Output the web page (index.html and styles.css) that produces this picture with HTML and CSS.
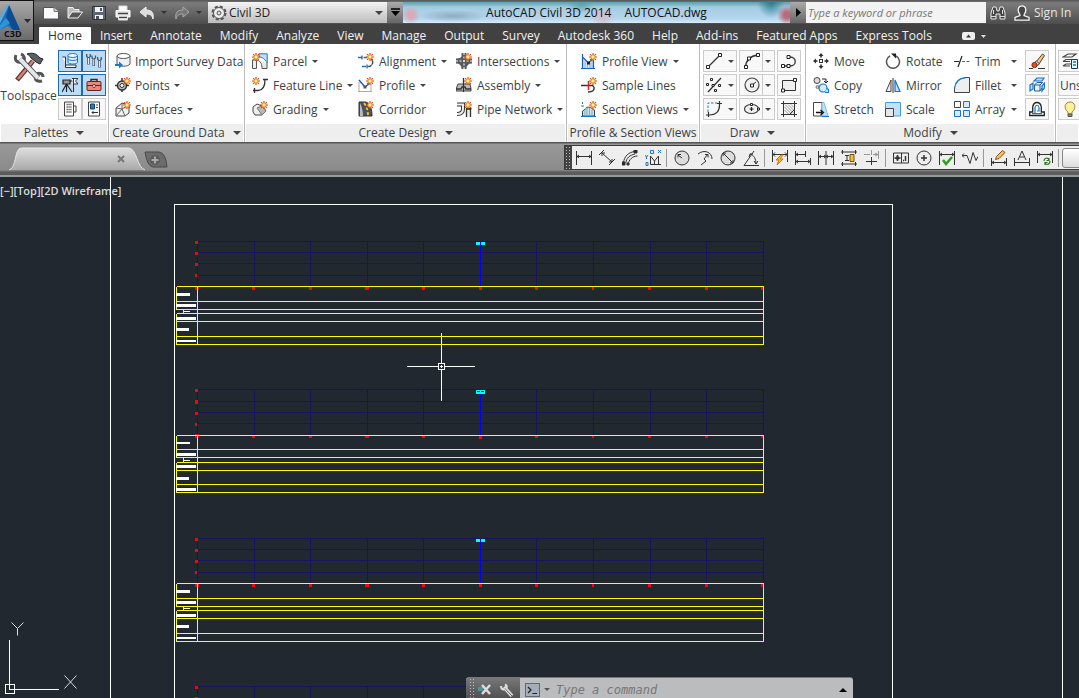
FILE: index.html
```html
<!DOCTYPE html>
<html lang="en">
<head>
<meta charset="utf-8">
<title>AutoCAD Civil 3D 2014 - AUTOCAD.dwg</title>
<link rel="stylesheet" href="styles.css">
</head>
<body>
<svg class="defs" aria-hidden="true">
  <symbol id="star" viewBox="0 0 9 9"><path d="M4.500 0v9M0 4.500h9M1.200 1.200l6.600 6.600M7.800 1.200L1.200 7.800" stroke="#e0401c" stroke-width="1.300"/><circle cx="4.500" cy="4.500" r="2.400" fill="#fff2a0" stroke="#ee8a10" stroke-width="1.100"/></symbol>
</svg>
<div class="app">
<header class="head">
  <button class="logo" aria-label="Application menu">
    <svg width="33" height="40" viewBox="0 0 33 40"><path d="M9 4L0 22v7l8-4 5 4h7z" fill="#1b6fb8"/><path d="M9 4l11 25h-7L6 17z" fill="#0d4c8e"/><path d="M9 4L0 22v-5L7 4z" fill="#4db0ea"/><path d="M6 17l4 5-10 7v-5z" fill="#2e93d8"/><path d="M24 18h7l-3.500 4z" fill="#2c2c2c"/></svg>
    <span class="logo-text">C3D</span>
  </button>
  <div class="titlebar">
    <div class="qat">
      <button aria-label="New"><svg class="i" viewBox="0 0 16 16"><path d="M.5 2.500H11l4.500 4V14H.5z" fill="#fafafa" stroke="#555"/><path d="M11 2.500v4h4.500" fill="#ccc" stroke="#777"/></svg></button>
      <button aria-label="Open"><svg class="i" viewBox="0 0 16 16"><path d="M1 13V2.500h5l1.500 2H12V7" fill="#bbb" stroke="#eee"/><path d="M1 13L5 7h10.500L11 13z" fill="#555" stroke="#f0f0f0"/></svg></button>
      <button aria-label="Save"><svg class="i" viewBox="0 0 16 16"><path d="M1.500 1.500h13v13h-13z" fill="#5d6674" stroke="#2d333d"/><path d="M4 2h8v5H4zM4 10h8v4H4z" fill="#f2f2f2"/><path d="M9 3h2v3H9zM5 11h3v3H5z" fill="#4a5260"/></svg></button>
      <button aria-label="Print"><svg class="i" viewBox="0 0 16 16"><path d="M4 1h8v5H4zM3.500 10h9v5h-9z" fill="#fff" stroke="#ddd"/><path d="M1 5.500h14V12H1z" fill="#e8e8e8" stroke="#fff"/><path d="M3 8.500h10M4 12.500h8" stroke="#444" stroke-width="1.500"/></svg></button>
      <button aria-label="Undo"><svg class="i" viewBox="0 0 16 16"><path d="M1 7l6-5v3c6 0 8 3 7 9-1-4-3-5-7-5v3z" fill="#ddd" stroke="#f2f2f2"/></svg></button>
      <span class="car dim"></span>
      <button aria-label="Redo"><svg class="i" viewBox="0 0 16 16"><path d="M15 7L9 2v3C3 5 1 8 2 14c1-4 3-5 7-5v3z" fill="#777" stroke="#aaa"/></svg></button>
      <span class="car dim"></span>
    </div>
    <div class="workspace">
      <svg class="i" viewBox="0 0 16 16"><circle cx="8" cy="8" r="6.500" fill="none" stroke="#555" stroke-width="2" stroke-dasharray="3.100 2"/><circle cx="8" cy="8" r="5.500" fill="#eee" stroke="#555"/><circle cx="8" cy="8" r="2" fill="#ddd" stroke="#555"/></svg>
      <select aria-label="Workspace"><option>Civil 3D</option></select>
      <span class="car big"></span>
    </div>
    <button class="square" aria-label="Customize toolbar"><svg width="9" height="9" viewBox="0 0 9 9"><path d="M0 1h9" stroke="#000" stroke-width="1.500"/><path d="M0 3h9L4.500 8z"/></svg></button>
    <div class="caption"><span>AutoCAD Civil 3D 2014</span><span>AUTOCAD.dwg</span></div>
    <button class="square" aria-label="Collapse search"><svg width="6" height="9" viewBox="0 0 6 9"><path d="M1 0v9l5-4.500z"/></svg></button>
    <input class="search" type="text" placeholder="Type a keyword or phrase" aria-label="Search">
    <div class="sign">
      <button aria-label="Find"><svg class="i" viewBox="0 0 16 16"><path d="M1 14V8l2-6h3l1 4h2l1-4h3l2 6v6h-5V9H6v5z" fill="#444" stroke="#e8e8e8"/><path d="M3.500 5v4M12.500 5v4M1 11.500h5M10 11.500h5" stroke="#ddd"/></svg></button>
      <button class="signin"><svg class="i" viewBox="0 0 16 16"><path d="M8 .8c4 0 4 4 3.500 6C11 8.500 10 9 10 10.500l5 2v2.700H1v-2.700l5-2C6 9 5 8.500 4.500 6.800 4 4.800 4 .8 8 .8z" fill="#454545" stroke="#f4f4f4" stroke-width="1.300"/></svg>Sign In</button>
    </div>
  </div>
  <nav class="tabs">
    <button class="on">Home</button><button>Insert</button><button>Annotate</button><button>Modify</button><button>Analyze</button><button>View</button><button>Manage</button><button>Output</button><button>Survey</button><button>Autodesk 360</button><button>Help</button><button>Add-ins</button><button>Featured Apps</button><button>Express Tools</button>
    <button class="mini" aria-label="Minimize ribbon"><svg width="26" height="8" viewBox="0 0 26 8"><rect width="13" height="8" rx="2" fill="#eee"/><path d="M4 5.500h5L6.500 2.500z" fill="#333"/><path d="M19 3h5l-2.500 3z" fill="#ddd"/></svg></button>
  </nav>
</header>

<div class="ribbon">
  <section class="panel">
    <div class="body palettes">
      <button class="toolspace"><svg width="32" height="32" viewBox="0 0 32 32"><path d="M4 29l16-19" stroke="#6b3028" stroke-width="5"/><path d="M5 28l15-18" stroke="#c98a7a" stroke-width="2.500"/><path d="M14 3c6-2 10 0 13 4l3 1-3 5-4-2-5-4c-1-2-2-3-4-4z" fill="#5b5f66" stroke="#222"/><path d="M7 8l18 19" stroke="#444" stroke-width="6"/><path d="M3 4c-2 5 1 8 5 7M8 3c3 1 4 4 3 7M22 27c1 3 3 4 7 3M23 23c4-2 7 0 7 3" fill="none" stroke="#555" stroke-width="3"/><path d="M7 8l18 19" stroke="#e3e6ea" stroke-width="4"/></svg>Toolspace</button>
      <div class="grid2">
        <button class="sel" aria-label="Toolspace"><svg class="i" viewBox="0 0 16 16"><path d="M.5 4h3v10.500H14V12H4" fill="#fff" stroke="#333"/><path d="M6 2.500v7c1 2 8.500 2 9.500 0v-7" fill="#d6ecfb" stroke="#1c74c4"/><ellipse cx="10.700" cy="2.500" rx="4.700" ry="2" fill="#fff" stroke="#1c74c4"/><path d="M6 6c1 2 8.500 2 9.500 0" fill="none" stroke="#1c74c4"/></svg></button>
        <button class="sel" aria-label="Survey toolspace"><svg class="i" viewBox="0 0 16 16"><path d="M.7 1v2.500L2.500 5l1.800-1.500V1M6 2.500V5l1.700 1.500L9.500 5V2.500M11.700 4v2.500L13.500 8l1.800-1.500V4" fill="none" stroke="#44566c" stroke-width="1.300"/><path d="M2.500 5v6.500M7.700 6.500V13M13.500 8v6.500" stroke="#44566c" stroke-width="2.600"/><path d="M2.500 5v6M7.700 6.500v6M13.500 8v6" stroke="#eef"/></svg></button>
        <button class="sel" aria-label="Survey"><svg class="i" viewBox="0 0 16 16"><path d="M1 3h7v4H1zM8 4h3M4.500 7v8M4.500 7L0 15M4.500 7L10 15" fill="#999" stroke="#222" stroke-width="1.200"/><path d="M11.500 15V1M10 1.500h6L13.500 4 16 7h-5" fill="#fff" stroke="#333"/></svg></button>
        <button class="sel" aria-label="Toolbox"><svg class="i" viewBox="0 0 16 16"><path d="M5 5V2.500h6V5" fill="none" stroke="#5c1a14" stroke-width="1.500"/><rect x="1" y="4.500" width="14" height="9" rx="1" fill="#e58a7c" stroke="#6d1f18"/><path d="M1 8.500h14" stroke="#6d1f18"/><path d="M7 7.500h2v3H7z" fill="#fff" stroke="#6d1f18" stroke-width=".7"/></svg></button>
        <button aria-label="Properties"><svg class="i" viewBox="0 0 16 16"><path d="M2.500 1h9v14h-9zM11.500 5H14v6h-2.500" fill="#fff" stroke="#444"/><path d="M4.500 3.500h5M4.500 6h5M4.500 8.500h5M4.500 11h5" stroke="#555" stroke-width="1.300" stroke-dasharray="1.300 .6"/></svg></button>
        <button aria-label="Panorama"><svg class="i" viewBox="0 0 16 16"><path d="M2.500 1h11v14h-11z" fill="#fff" stroke="#444"/><path d="M4.500 3h4v5h-4z" fill="#2a78c0" stroke="#123c66"/><path d="M10 4h2M10 6.500h2" stroke="#444"/><path d="M12 11.500H6M7.500 10L6 11.500 7.500 13" fill="none" stroke="#333"/></svg></button>
      </div>
    </div>
    <button class="name">Palettes<span class="car big"></span></button>
  </section>

  <section class="panel">
    <div class="body ground">
      <button class="cmd"><svg class="i" viewBox="0 0 16 16"><path d="M2 3v8c2 3 11 3 13 0V3" fill="#eef0f2" stroke="#555"/><ellipse cx="8.500" cy="3" rx="6.500" ry="2.500" fill="#fff" stroke="#555"/><path d="M0 11h4V8.500l4 3.500-4 3.500V13H0z" fill="#1e78c8"/></svg>Import Survey Data</button>
      <button class="cmd"><svg class="i" viewBox="0 0 16 16"><path d="M7 1v14M0 8.500h14" stroke="#333" stroke-width="1.500"/><circle cx="7" cy="8.500" r="4.500" fill="#bbb" stroke="#333" stroke-width="1.500"/><circle cx="7" cy="8.500" r="2" fill="#fff" stroke="#333"/><use href="#star" x="8" width="8" height="8"/></svg>Points<span class="car"></span></button>
      <button class="cmd"><svg class="i" viewBox="0 0 16 16"><path d="M1 7l6-5 7 2v8l-4 3H1z" fill="#f2f2f2" stroke="#444"/><path d="M1 7l6 1 7-4M7 2v6l-6 7M7 8l3 7" fill="none" stroke="#666"/><use href="#star" x="8" width="8" height="8"/></svg>Surfaces<span class="car"></span></button>
    </div>
    <button class="name">Create Ground Data<span class="car big"></span></button>
  </section>

  <section class="panel">
    <div class="body design">
      <button class="cmd"><svg class="i" viewBox="0 0 16 16"><path d="M.5 7h4v8.500h-4z" fill="#eee" stroke="#555"/><path d="M7 .8h8.200V10C13 6 10 4 7 4z" fill="#bfe2f7" stroke="#1c74c4"/><path d="M5 7c4 1 5 5 5 8.500h5V10" fill="#e8e8e8" stroke="#555"/><use href="#star" width="8" height="8"/></svg>Parcel<span class="car"></span></button>
      <button class="cmd"><svg class="i" viewBox="0 0 16 16"><path d="M1 13.500h5c5 0 7-4 7-11M11 2.500h5M2.500 11v5" fill="none" stroke="#333" stroke-width="1.300"/><use href="#star" width="8" height="8"/></svg>Feature Line<span class="car"></span></button>
      <button class="cmd"><svg class="i" viewBox="0 0 16 16"><path d="M1 6l4-3 5 2 4 5-4 4H3l-2-3z" fill="#eee" stroke="#444"/><path d="M5 7l5-2 4 5-4 4z" fill="#b5b8bd" stroke="#777"/><use href="#star" x="8" width="8" height="8"/></svg>Grading<span class="car"></span></button>
      <button class="cmd"><svg class="i" viewBox="0 0 16 16"><path d="M0 4.500h9M4 13.500h6c6 0 6-7 2-8" fill="none" stroke="#1c74c4" stroke-width="1.300" stroke-dasharray="4 1.500"/><path d="M4 2.500v4M9 11.500v4M13 6c3 3 1 7-2 7.500" fill="none" stroke="#333"/><use href="#star" x="8" width="8" height="8"/></svg>Alignment<span class="car"></span></button>
      <button class="cmd"><svg class="i" viewBox="0 0 16 16"><path d="M1 3l6 7 6-5" fill="none" stroke="#1c5fb4" stroke-width="1.500"/><path d="M1 5v9M13 7v7M0 14.500h14" stroke="#aaa"/><path d="M5.500 8.500h3v3h-3z" fill="#555"/><use href="#star" x="8" width="8" height="8"/></svg>Profile<span class="car"></span></button>
      <button class="cmd"><svg class="i" viewBox="0 0 16 16"><path d="M1 1h7c5 3 6 8 6 14H1z" fill="#4d5258" stroke="#333"/><path d="M2 2v13h3c0-5-1-9-3-13z" fill="#b8bcc0"/><path d="M6 2c3 4 4 8 4 13" fill="none" stroke="#f6c828" stroke-width="1.800" stroke-dasharray="3 2"/><use href="#star" x="8" width="8" height="8"/></svg>Corridor</button>
      <button class="cmd"><svg class="i" viewBox="0 0 16 16"><path d="M5.500 0v3q0 2.500-5.500 2.500v5q5.500 0 5.500 5.500h5q0-5.500 5.500-5.500v-5q-5.500 0-5.500-2.500V0z" fill="#555b63"/><path d="M8 0v16M0 8h16" stroke="#fff" stroke-dasharray="2 1.500"/><use href="#star" x="8" width="8" height="8"/></svg>Intersections<span class="car"></span></button>
      <button class="cmd"><svg class="i" viewBox="0 0 16 16"><path d="M0 12l2-5h12l1 5v2H0z" fill="#b8bcc0" stroke="#444"/><path d="M0 12h5l1-2h3l1 2h5M7.500 1v14" fill="none" stroke="#333" stroke-width="1.300"/><use href="#star" x="8" width="8" height="8"/></svg>Assembly<span class="car"></span></button>
      <button class="cmd"><svg class="i" viewBox="0 0 16 16"><path d="M1 3.500h6V8c0 3-2 5-6 5" fill="none" stroke="#333" stroke-width="4"/><path d="M1 3.500h6V8c0 3-2 5-6 5" fill="none" stroke="#eee" stroke-width="2"/><path d="M10.500 16V8h4v8" fill="#eee" stroke="#333" stroke-width="1.300"/><path d="M10 7.500h5.500" stroke="#333" stroke-width="1.500"/><use href="#star" x="8" width="8" height="8"/></svg>Pipe Network<span class="car"></span></button>
    </div>
    <button class="name">Create Design<span class="car big"></span></button>
  </section>

  <section class="panel">
    <div class="body views">
      <button class="cmd"><svg class="i" viewBox="0 0 16 16"><path d="M1.500 4l6 6 5-5v10.500h-11z" fill="#cfe2f4"/><path d="M4 8v7M6.500 11v4M9 10v5M11 8v7" stroke="#9bb8d4"/><path d="M1.500 1v3M0 15.500h14M1.500 4l6 6 5-5M1.500 4v11M12.500 7v8" fill="none" stroke="#1c5fb4" stroke-width="1.200"/><path d="M6 8.500h3v3H6z" fill="#222"/><use href="#star" x="8" width="8" height="8"/></svg>Profile View<span class="car"></span></button>
      <button class="cmd"><svg class="i" viewBox="0 0 16 16"><path d="M0 8.500h11M7 15c6 0 8-4 4-7" fill="none" stroke="#333" stroke-width="1.300"/><path d="M7.500 4v9" stroke="#e02010" stroke-width="1.500"/><use href="#star" x="8" width="8" height="8"/></svg>Sample Lines</button>
      <button class="cmd"><svg class="i" viewBox="0 0 16 16"><path d="M1.500 15V10c3-1 3-4 6-4s4 3 6 3v6z" fill="#cfe0ee" stroke="#444"/><path d="M4 9v6M6 7v8M8.500 7v8M11 9v6" stroke="#8ab"/><path d="M1.500 1v2M0 5h3M0 15.500h15" stroke="#1c74c4"/><use href="#star" x="8" width="8" height="8"/></svg>Section Views<span class="car"></span></button>
    </div>
    <button class="name">Profile &amp; Section Views</button>
  </section>

  <section class="panel">
    <div class="body draw">
      <button class="box" aria-label="Line"><svg class="i" viewBox="0 0 16 16"><path d="M2 14L14 2" stroke="#333" stroke-width="1.300"/><path d="M.5 12.500h3v3h-3zM12.500.5h3v3h-3z" fill="#fff" stroke="#222"/></svg><span class="car"></span></button>
      <button class="box split" aria-label="Arc"><svg class="i" viewBox="0 0 16 16"><path d="M1.500 14C2 7 6 3 14 2" fill="none" stroke="#333" stroke-width="1.300"/><path d="M.5 12.500h3v3h-3zM12.500.5h3v3h-3zM3.500 4h3v3h-3z" fill="#fff" stroke="#222"/></svg><span class="car"></span></button>
      <button class="box" aria-label="Polyline"><svg class="i" viewBox="0 0 16 16"><path d="M2 13h7c7 0 7-9 0-9" fill="none" stroke="#333" stroke-width="1.300"/><path d="M.5 11.500h3v3h-3zM6 11.500h3v3H6zM6 2.500h3v3H6z" fill="#fff" stroke="#222"/></svg></button>
      <button class="box" aria-label="Points"><svg class="i" viewBox="0 0 16 16"><path d="M2 15L15 1" stroke="#333" stroke-width="1.300"/><path d="M4.500 1.500h2v2h-2zM.5 6.500h2v2h-2zM6 7.500h2v2H6zM12.500 7.500h2v2h-2zM8.500 12.500h2v2h-2z" fill="#fff" stroke="#222"/></svg><span class="car"></span></button>
      <button class="box split" aria-label="Circle"><svg class="i" viewBox="0 0 16 16"><circle cx="8" cy="8" r="7" fill="#f0f0f0" stroke="#444" stroke-width="1.200"/><path d="M8 8l4-3" stroke="#333"/><path d="M6.500 7h3v3h-3z" fill="#fff" stroke="#222"/></svg><span class="car"></span></button>
      <button class="box" aria-label="Rectangle"><svg class="i" viewBox="0 0 16 16"><path d="M1.500 3.500h13v10h-13z" fill="#eee" stroke="#333"/><path d="M.5 12h3v3h-3zM12.500 1.500h3v3h-3z" fill="#fff" stroke="#222"/></svg></button>
      <button class="box" aria-label="Curve"><svg class="i" viewBox="0 0 16 16"><path d="M2 11V2h10" fill="none" stroke="#1c74c4" stroke-dasharray="2.500 1.500"/><path d="M13.500 0v4c0 7-4 10-10 10H0M2.500 11v5M11 2.500h5" fill="none" stroke="#333" stroke-width="1.200"/></svg><span class="car"></span></button>
      <button class="box split" aria-label="Ellipse"><svg class="i" viewBox="0 0 16 16"><ellipse cx="7.500" cy="8" rx="7" ry="4.500" fill="#f0f0f0" stroke="#444" stroke-width="1.200"/><path d="M7.500 6v4M5.500 8h4" stroke="#222" stroke-width="1.200"/><path d="M6.500 2.500h2v2h-2zM13.500 7h2v2h-2z" fill="#fff" stroke="#222"/></svg><span class="car"></span></button>
      <button class="box" aria-label="Hatch"><svg class="i" viewBox="0 0 16 16"><path d="M3.500 6l7 7M3.500 9l4 4M4 3.500l9 9M7 3.500l6 6M10 3.500l3 3" stroke="#999"/><path d="M2.500 0v16M13.500 0v16M0 2.500h16M0 13.500h16M13 9l-4 4" stroke="#333"/></svg></button>
    </div>
    <button class="name">Draw<span class="car big"></span></button>
  </section>

  <section class="panel">
    <div class="body modify">
      <button class="cmd"><svg class="i" viewBox="0 0 16 16"><path d="M8 1v3.500M8 11.500V15M1 8h3.500M11.500 8H15" stroke="#222" stroke-width="1.500"/><path d="M8 0l2.500 3h-5zM8 16l2.500-3h-5zM0 8l3-2.500v5zM16 8l-3-2.500v5zM6 6h4v4H6z" fill="#333"/><path d="M7 7h2v2H7z" fill="#fff"/></svg>Move</button>
      <button class="cmd"><svg class="i" viewBox="0 0 16 16"><circle cx="4" cy="3.500" r="3" fill="#ddd" stroke="#444"/><circle cx="4.500" cy="10" r="1.500" fill="#ccc" stroke="#777"/><circle cx="10" cy="11" r="4" fill="#d6ecfb" stroke="#1c74c4" stroke-width="1.200"/><path d="M13 12h2.500v3.500H12" fill="#bfe2f7" stroke="#1c74c4"/><path d="M9 2h4v3M11 4l2 2 2-2" fill="none" stroke="#222"/></svg>Copy</button>
      <button class="cmd"><svg class="i" viewBox="0 0 16 16"><path d="M.5 1.500H9v13.500H.5z" fill="#fff" stroke="#444"/><path d="M9 1.500h2L15 15H9z" fill="#bfe2f7" stroke="#7db9e4"/><path d="M3 11.500h6M7.500 9l3 2.500-3 2.500" fill="none" stroke="#111" stroke-width="1.300"/><path d="M9 15.500h7" stroke="#1c74c4"/></svg>Stretch</button>
      <button class="cmd"><svg class="i" viewBox="0 0 16 16"><path d="M11 3a6.500 6.500 0 1 1-6 0" fill="none" stroke="#555" stroke-width="1.500"/><path d="M6 .5h5v5z" fill="#222"/></svg>Rotate</button>
      <button class="cmd"><svg class="i" viewBox="0 0 16 16"><path d="M6 3v11.500H1z" fill="#eee" stroke="#444"/><path d="M10 3v11.500h5z" fill="#bfe2f7" stroke="#1c74c4" stroke-width="1.200"/><path d="M8 1v15" stroke="#333"/></svg>Mirror</button>
      <button class="cmd"><svg class="i" viewBox="0 0 16 16"><path d="M.5 1.500h15v13.500h-7V9h-8z" fill="#bfe2f7" stroke="#4b9bd6"/><path d="M.5 7.500h8v8h-8z" fill="#e6e6e6" stroke="#444"/></svg>Scale</button>
      <button class="cmd"><svg class="i" viewBox="0 0 16 16"><path d="M0 8.500h5M4 14l4-11" stroke="#222" stroke-width="1.200"/><path d="M8 8.500h8" stroke="#1c74c4" stroke-width="1.200" stroke-dasharray="3 1.500"/></svg>Trim</button>
      <button class="cmd"><svg class="i" viewBox="0 0 16 16"><path d="M.5 15.500C0 5 5 .5 15.500.5v15z" fill="#eee"/><path d="M.5 12C1 4 5 1 12 .5" fill="none" stroke="#1c74c4" stroke-width="1.300"/><path d="M12 .5h3.500v15H.500V12" fill="none" stroke="#444"/></svg>Fillet</button>
      <button class="cmd"><svg class="i" viewBox="0 0 16 16"><path d="M.5.500h6v6h-6z" fill="#fff" stroke="#444"/><path d="M9.500.500h6v6h-6zM.5 9.500h6v6h-6zM9.500 9.500h6v6h-6z" fill="#d6ecfb" stroke="#1c74c4"/></svg>Array</button>
      <span class="arrow"><span class="car"></span></span><span class="arrow"><span class="car"></span></span><span class="arrow"><span class="car"></span></span>
      <button class="box" aria-label="Erase"><svg class="i" viewBox="0 0 16 16"><path d="M0 15.500h4M9 15.500h7" stroke="#333"/><path d="M7 9L13.500 1l2 1.500L10 11z" fill="#f0c890" stroke="#5a3c20"/><path d="M5.500 9.500l1.800-1.500 3 2.700L9 12.500z" fill="#eee" stroke="#444"/><circle cx="5.500" cy="12" r="2.600" fill="#d8552c" stroke="#8a2314"/></svg></button>
      <button class="box" aria-label="Explode"><svg class="i" viewBox="0 0 16 16"><path d="M5 4l3-3h7l-2 3zM1 8l3-2v6l-3 2zM13 9l2.500-3v5L13 14z" fill="#bfe2f7" stroke="#1c74c4" stroke-width="1.200"/><path d="M5.500 8h5.500v6H5.500zM5.500 8L8 5.500h5.500L11 8M11 14l2-3" fill="#e8f4fd" stroke="#1c5fa4"/></svg></button>
      <button class="box" aria-label="Offset"><svg class="i" viewBox="0 0 16 16"><path d="M.7 14.500h14.600v-3.500h-3V6c-1-6-7.600-6-8.600 0v5h-3z" fill="#fff" stroke="#222" stroke-width="1.300"/><path d="M3 12.700h10M6 12.500V6.500c.5-3 3.500-3 4 0v3.500H8" fill="none" stroke="#1c74c4" stroke-width="1.200"/></svg></button>
    </div>
    <button class="name">Modify<span class="car big"></span></button>
  </section>

  <section class="panel">
    <div class="body layers">
      <button class="box wide" aria-label="Layer properties"><svg class="i" viewBox="0 0 16 16"><path d="M1 4l5-3h8l-4 3zM1 8.500l3-2h6M1 8.500h7M1 13l3-2h5M1 13h7" fill="none" stroke="#444" stroke-width="1.200"/><path d="M9.500 6.500h6v9h-6z" fill="#eaf4fc" stroke="#234"/><path d="M11 9h3M11 12h3" stroke="#1c74c4" stroke-width="1.500"/></svg></button>
      <button class="box wide text">Unsaved Layer State</button>
      <button class="box wide" aria-label="Layer on"><svg class="i" viewBox="0 0 16 16"><path d="M6 11C1 7 3 1 8 1s7 6 2 10v2H6z" fill="#fff0a0" stroke="#a98820"/><path d="M6 13h4v2.500H6z" fill="#888" stroke="#555"/></svg></button>
    </div>
    <div class="name"></div>
  </section>
</div>

<div class="docbar">
  <div class="doctabs">
    <svg width="170" height="26" viewBox="0 0 170 26"><defs><linearGradient id="tab" x2="0" y2="1"><stop offset="0" stop-color="#dedede"/><stop offset="1" stop-color="#a9a9a9"/></linearGradient></defs><path d="M9 25C17 23 14 4 21 3h108c8 1 8 20 16 22z" fill="url(#tab)"/><path d="M9 25C17 23 14 4 21 3h108c8 1 8 20 16 22" fill="none" stroke="#e6e6e6"/><path d="M118 11l6 6M124 11l-6 6" stroke="#777" stroke-width="2"/><path d="M145 7h14q7 1 8 15h-14q-6-1-8-15z" fill="#6c6c6c" stroke="#484848"/><circle cx="155" cy="15" r="5" fill="#5c5c5c"/><path d="M155 11.500v7M151.500 15h7" stroke="#aaa" stroke-width="2"/></svg>
  </div>
  <div class="dims">
    <i class="grip"></i>
    <button aria-label="Linear"><svg class="i" viewBox="0 0 16 16"><path d="M.5 1v14M15.500 1v14M1 6.500h14M3 5L1 6.500 3 8M13 5l2 1.500L13 8"/></svg></button>
    <button aria-label="Aligned"><svg class="i" viewBox="0 0 16 16"><path d="M0 5l5-5M10 15l6-6M3 3l10 9M3 6V3h3M13 9v3h-3"/></svg></button>
    <button aria-label="Arc length"><svg class="i" viewBox="0 0 16 16"><path d="M1.500 13C2 6 7 2 13 1.500M6.500 14c0-4 4-8 9-8M4 13c0-5 4-8 9-9"/><path d="M0 12h3v3H0zM12 0h3v3h-3zM5 13h2v2H5z" fill="#222"/></svg></button>
    <button aria-label="Ordinate"><svg class="i" viewBox="0 0 16 16"><path d="M5.500 6v8.500h11M5.500 6l4 5 4-5v9M9.500 11v4"/><path d="M13 0l3 3M16 0l-3 3M0 5l1.500 2L3 5M1.500 7v2M5.500.500h3v3h-3zM1 12.500h2v3H1z" stroke="#1c74c4"/></svg></button>
    <b></b>
    <button aria-label="Radius"><svg class="i" viewBox="0 0 16 16"><circle cx="8" cy="8" r="7" fill="#ddd"/><path d="M8 8L4 5M4 7.500V4.500h3"/></svg></button>
    <button aria-label="Jogged"><svg class="i" viewBox="0 0 16 16"><path d="M1 4c6-5 14-2 14 5M4 15l5-4-2-2 4-5M8 4.500h3v3"/></svg></button>
    <button aria-label="Diameter"><svg class="i" viewBox="0 0 16 16"><circle cx="8" cy="8" r="7" fill="#ddd"/><path d="M3 3l10 10M3 6V3h3M13 10v3h-3"/></svg></button>
    <button aria-label="Angular"><svg class="i" viewBox="0 0 16 16"><path d="M16 15.500H1L11 1M7 4c4 1 6 5 6 10M6 7l1-3h3M11 11l2 3 2-3"/></svg></button>
    <b></b>
    <button aria-label="Quick"><svg class="i" viewBox="0 0 16 16"><path d="M.5 0v12M15.500 0v12M1 4.500h14M3 2.500l-2 2 2 2M13 2.500l2 2-2 2"/><path d="M9 5l-5 5h3l-2 5 6-6H8l3-4z" fill="#f8c020" stroke="#d8701c"/></svg></button>
    <button aria-label="Baseline"><svg class="i" viewBox="0 0 16 16"><path d="M.5 1v14M10.500 1v6M15.500 8v7M1 4.500h9M1 11.500h14M3 3L1 4.500 3 6M3 10l-2 1.500L3 13M13 10l2 1.500-2 1.500"/></svg></button>
    <button aria-label="Continue"><svg class="i" viewBox="0 0 16 16"><path d="M.5 1v14M8 1v14M15.500 1v14M1 6.500h14M3 5L1 6.500 3 8M6 5l2 1.500L6 8M10 5L8 6.500 10 8M13 5l2 1.500L13 8"/></svg></button>
    <button aria-label="Space"><svg class="i" viewBox="0 0 16 16"><path d="M1.500 0v4M14.500 0v4M0 2h16M1.500 12v4M14.500 12v4M0 14h16M4 5.500h4M6 5v6M4 10.500h4"/><path d="M9 4.500h4v7H9z" fill="#f6c030" stroke="#7a4c08"/></svg></button>
    <button aria-label="Break"><svg class="i" viewBox="0 0 16 16"><path d="M0 4.500h6M9 4.500h6M14.500 1v8M7.500 0v5M11 3l3 1.500L11 6" stroke="#999"/><path d="M7.500 7v8M2 11.500h11"/></svg></button>
    <b></b>
    <button aria-label="Tolerance"><svg class="i" viewBox="0 0 16 16"><path d="M.5 3h15v10H.5zM8.500 3v10"/><path d="M4.500 5v6M1.500 8h6M12.500 6v5M10 10.500h1" stroke-width="1.500"/><circle cx="4.500" cy="8" r="1.500"/></svg></button>
    <button aria-label="Center mark"><svg class="i" viewBox="0 0 16 16"><circle cx="8" cy="8" r="7"/><path d="M8 5v6M5 8h6" stroke-width="1.500"/></svg></button>
    <button aria-label="Inspect"><svg class="i" viewBox="0 0 16 16"><path d="M.5 1v14M15.500 1v14M1 4.500h14M3 3L1 4.500 3 6M13 3l2 1.500L13 6"/><path d="M4 10l3 4 6-7" stroke="#2ca01c" stroke-width="2.500"/></svg></button>
    <button aria-label="Jogged linear"><svg class="i" viewBox="0 0 16 16"><path d="M0 5.500h5l3 8 3-11 3 8 2-4M2 3.500l-2 2 2 2"/></svg></button>
    <b></b>
    <button aria-label="Dimension edit"><svg class="i" viewBox="0 0 16 16"><path d="M.5 8v8M15.500 8v8M1 12.500h14M3 11l-2 1.500L3 14M13 11l2 1.500-2 1.500"/><path d="M4.500 9.500l1-3 6-6 2.500 2-6 6z" fill="#f6c060" stroke="#8a5014"/></svg></button>
    <button aria-label="Text edit"><svg class="i" viewBox="0 0 16 16"><path d="M.5 8v8M15.500 8v8M1 12.500h14M4 10l4-9 4 9M6 7h4"/></svg></button>
    <button aria-label="Update"><svg class="i" viewBox="0 0 16 16"><path d="M.5 1v12M15.500 1v12M1 4.500h14M3 3L1 4.500 3 6M13 3l2 1.500L13 6"/><path d="M7 11c0-3 4-4 5-1M13 11c0 4-4 4-5 2M12 8v2.500H9.500M8 15v-2.500h2.500" stroke="#2a7a2a" stroke-width="1.200"/></svg></button>
    <b></b>
    <div class="style"></div>
  </div>
</div>

<main class="canvas">
  <svg class="drawing" role="img" aria-label="Profile views in model space">
    <g transform="translate(0 -177)" shape-rendering="crispEdges">
      <g transform="translate(.5 .5)" fill="none">
        <g stroke="#14145f">
          <path d="M197 241H763M197 252H763M197 263H763M197 275H763M197 241V286M254 241V286M310 241V286M367 241V286M423 241V286M536 241V286M593 241V286M650 241V286M706 241V286M763 241V286"/>
          <path d="M197 389H763M197 401H763M197 412H763M197 423H763M197 389V435M254 389V435M310 389V435M367 389V435M423 389V435M536 389V435M593 389V435M650 389V435M706 389V435M763 389V435"/>
          <path d="M197 538H763M197 549H763M197 560H763M197 572H763M197 538V583M254 538V583M310 538V583M367 538V583M423 538V583M536 538V583M593 538V583M650 538V583M706 538V583M763 538V583"/>
          <path d="M197 686H763M197 698H763M197 686V732M254 686V732M310 686V732M367 686V732M423 686V732M480 686V732M536 686V732M593 686V732M650 686V732M706 686V732M763 686V732"/>
        </g>
        <path d="M480 241V286M480 389V435M480 538V583" stroke="#00f"/>
        <g stroke="#fff">
          <path d="M110 176V700M1062 176V700M174 700V204H892V700"/>
          <path d="M5 684H14V693H5zM438 363H444V369H438z"/>
          <path d="M11 622L17 628V635M17 628L23 622M64 675L76 688M76 675L64 688" stroke="#ddd" shape-rendering="auto"/>
        </g>
      </g>
      <path fill="#fff" d="M9 640h1v50h-1zM9 689h50v1h-50zM407 366h31v1h-31zM445 366h30v1h-30zM441 333h1v30h-1zM441 370h1v31h-1zM440 366h3v1h-3zM441 365h1v3h-1z"/>
      <g fill="#f00">
        <path d="M195 241h3v3h-3zM195 252h3v3h-3zM195 263h3v3h-3zM195 274h2v3h-2zM195 287h4v3h-4zM252 287h3v3h-3zM309 287h3v3h-3zM365 287h4v3h-4zM422 287h3v3h-3zM479 287h3v3h-3zM535 287h3v3h-3zM592 287h2v3h-2zM648 287h3v3h-3zM705 287h3v3h-3zM761 287h2v3h-2z"/>
        <path d="M195 389h3v3h-3zM195 400h3v4h-3zM195 412h3v3h-3zM195 423h2v3h-2zM195 434h4v4h-4zM252 436h3v2h-3zM309 436h3v2h-3zM365 436h4v2h-4zM422 436h3v2h-3zM479 436h3v3h-3zM535 436h3v2h-3zM592 436h2v2h-2zM648 436h3v2h-3zM705 436h3v2h-3zM761 436h2v2h-2z"/>
        <path d="M195 538h3v3h-3zM195 549h3v3h-3zM195 560h3v3h-3zM195 571h2v3h-2zM195 584h4v3h-4zM252 584h3v3h-3zM309 584h3v3h-3zM365 584h4v3h-4zM422 584h3v3h-3zM479 584h3v3h-3zM535 584h3v3h-3zM592 584h2v3h-2zM648 584h3v3h-3zM705 584h3v3h-3zM761 584h2v3h-2z"/>
        <path d="M195 686h3v3h-3zM195 697h3v3h-3z"/>
      </g>
      <g transform="translate(.5 .5)" fill="none" stroke="#ff0">
        <path d="M176 286H763V344H176M176 301H763M176 309H763M176 313H763M176 321H763M176 336H763M197 286V344M176 286V309M176 313V344M183 309V313"/>
        <path d="M176 435H763V492H176M176 449H763M176 457H763M176 462H763M176 470H763M176 484H763M197 435V492M176 435V457M176 462V492M183 457V462"/>
        <path d="M176 583H763V641H176M176 598H763M176 606H763M176 610H763M176 618H763M176 633H763M197 583V641M176 583V606M176 610V641M183 606V610"/>
      </g>
      <path fill="#fff" d="M176 293h14v3h-14zM176 304h20v3h-20zM184 311h6v1h-6zM176 317h20v3h-20zM176 328h13v3h-13zM176 340h20v2h-20zM176 442h14v2h-14zM176 453h20v3h-20zM184 460h6v1h-6zM176 465h20v3h-20zM176 477h13v3h-13zM176 488h20v3h-20zM176 590h14v3h-14zM176 601h20v3h-20zM184 608h6v1h-6zM176 614h20v3h-20zM176 625h13v3h-13zM176 637h20v2h-20z"/>
      <path fill="#0ff" d="M476 242h4v3h-4zM481 242h4v3h-4zM476 390h9v4h-9zM476 539h4v3h-4zM481 539h4v3h-4z"/>
      <path fill="#123" d="M477 391h3v1h-3zM481 391h3v1h-3z"/>
    </g>
  </svg>
  <div class="viewlabel">[−][Top][2D Wireframe]</div>
  <form class="cmdline">
    <div class="cmdhead">
      <i class="grip"></i>
      <button type="button" aria-label="Close"><svg width="14" height="12" viewBox="0 0 14 12"><path d="M0 3h5v4H0z" fill="#3f9a9c"/><path d="M4 1l8 9M12 1l-8 9" stroke="#ddd" stroke-width="2.500"/></svg></button>
      <button type="button" aria-label="Customize"><svg width="14" height="14" viewBox="0 0 14 14"><path d="M4 4l8 9" stroke="#ddd" stroke-width="3.500"/><path d="M5 1.500C8 3 7 7 3 6.500M1 3c0 2 1 3.500 3 3.500" fill="none" stroke="#ddd" stroke-width="2"/><path d="M5 5.500l7 7.500" stroke="#666"/></svg></button>
    </div>
    <svg width="16" height="14" viewBox="0 0 16 14"><rect x=".5" y=".5" width="14" height="13" fill="#a4adba" stroke="#5f6875"/><path d="M3 4l3 3-3 3M7.500 10.500H12" fill="none" stroke="#222" stroke-width="1.200"/></svg>
    <span class="car dim"></span>
    <input type="text" placeholder="Type a command" aria-label="Command">
    <button type="button" aria-label="History"><svg width="8" height="4" viewBox="0 0 8 4"><path d="M0 4h8L4 0z"/></svg></button>
  </form>
</main>
</div>
</body>
</html>
```

FILE: styles.css
```css
* { box-sizing: border-box; }
body { margin: 0; font-family: "Open Sans", "Noto Sans", sans-serif; font-size: 12px; color: #3b3f46; background: #212830; }
button, input, select { font: inherit; color: inherit; border: 0; margin: 0; padding: 0; background: none; }
button { display: flex; align-items: center; white-space: nowrap; }
svg { display: block; flex: none; }
.defs { position: absolute; width: 0; height: 0; }
.i { width: 16px; height: 16px; }
.car { flex: none; border: 3px solid transparent; border-top-color: #444; border-bottom: 0; margin-left: 6px; }
.car.big { border-width: 4px 4px 0; margin-left: 8px; }
.car.dim { border-top-color: #555; margin: 0; }
.app { display: flex; flex-direction: column; height: 100vh; overflow: hidden; }

.head { display: grid; grid-template-columns: 34px minmax(0, 1fr); grid-template-rows: 24px 20px; flex: none; background: #414141; }
.logo { grid-row: 1 / 3; display: block; height: 41px; background: linear-gradient(#a9a9a9, #6a6a6a); border: 1px solid #111; border-left: 0; position: relative; overflow: hidden; }
.logo-text { position: absolute; left: 4px; bottom: 0; font-size: 9px; line-height: 12px; font-weight: 700; color: #111; }
.titlebar { display: flex; align-items: stretch; background: linear-gradient(#555, #7b7b7b 12%, #4d4d4d); padding: 2px 0 1px; min-width: 0; }
.qat { display: flex; align-items: center; gap: 8px; width: 174px; padding-left: 9px; flex: none; }
.qat .car { margin: 0 -1px 0 -2px; border-top-color: #333; }
.workspace { display: flex; align-items: center; flex: none; width: 179px; padding: 0 4px 0 3px; background: linear-gradient(#f4f4f4, #bcbcbc); }
.workspace select { flex: 1; appearance: none; padding-left: 2px; color: #222; }
.square { width: 16px; flex: none; justify-content: center; background: linear-gradient(#aaa, #666); }
.caption { flex: 1; min-width: 0; display: flex; gap: 13px; justify-content: center; align-items: center; white-space: nowrap; color: #111;
  background: radial-gradient(circle at 8px 13px, #dba9b4 3px, transparent 9px), radial-gradient(ellipse 34px 6px at 50px 14px, #8fabc0, transparent), radial-gradient(circle at 384px 13px, #b96a7c 3px, transparent 10px), radial-gradient(ellipse 14px 16px at 368px 0, #2d7a92, transparent), radial-gradient(circle at 200px 15px, #d3bccb, transparent 12px), radial-gradient(ellipse 14px 12px at 178px 0, #5a9db0, transparent), linear-gradient(#5d9db0, #a5cbe2 25%, #b4d6ee 80%, #d8edfa); }
.search { width: 180px; flex: none; padding: 0 2px; background: #f3f3f3; font-size: 11px; font-style: italic; }
.search::placeholder { color: #777; opacity: 1; }
.sign { display: flex; align-items: center; gap: 8px; width: 93px; flex: none; padding-left: 4px; color: #e6e6e6; }
.signin { gap: 4px; }
.tabs { display: flex; min-width: 0; padding-left: 5px; color: #f2f2f2; overflow: hidden; }
.tabs button { padding: 0 9px; height: 17px; margin-top: 3px; line-height: 17px; flex: none; }
.tabs .on { background: #fff; color: #333; border-radius: 1px 1px 0 0; }
.tabs .mini { padding-left: 21px; }

.ribbon { display: grid; grid-template-columns: 109px 136px 322px 133px 106px 250px minmax(0, 1fr); flex: none; background: #fff; }
.panel { display: flex; flex-direction: column; min-width: 0; border-right: 1px solid #bbb; overflow: hidden; }
.panel:last-child { border-right: 0; }
.body { height: 80px; padding-top: 5px; }
.name { height: 18px; width: calc(100% - 2px); margin-left: 1px; justify-content: center; background: #eee; line-height: 18px; }
.cmd { gap: 5px; height: 24px; }
.cmd .car { margin-left: 0; }
.palettes { display: flex; }
.toolspace { flex-direction: column; width: 57px; height: 60px; gap: 4px; padding-top: 2px; }
.grid2 { display: grid; grid-template-columns: 24px 24px; grid-auto-rows: 24px; margin-left: 1px; }
.grid2 button, .box { height: 22px; margin-top: 1px; justify-content: center; border: 1px solid #ccc; background: #f8f8f8; }
.grid2 .sel { background: #bcdcf5; border-color: #1c6cb4; }
.ground { padding-left: 6px; }
.ground .cmd { gap: 4px; }
.design { display: grid; grid-auto-flow: column; grid-template-columns: 106px 98px 110px; grid-template-rows: repeat(3, 24px); padding-left: 7px; }
.views { padding-left: 14px; }
.draw { display: grid; grid-template-columns: 34px 36px 24px; grid-auto-rows: 24px; column-gap: 2px; padding-left: 3px; }
.draw .box { gap: 6px; }
.draw .box .car { margin: 0; }
.draw .split { gap: 5px; background: linear-gradient(90deg, #f8f8f8 22px, #ccc 22px, #ccc 23px, #f8f8f8 23px); }
.modify { display: grid; grid-auto-flow: column; grid-template-columns: 72px 69px 57px 14px 24px; grid-template-rows: repeat(3, 24px); padding-left: 7px; }
.arrow { display: flex; align-items: center; }
.arrow .car { margin: 0; }
.layers { display: grid; grid-template-columns: 140px; grid-auto-rows: 24px; padding-left: 2px; align-content: start; }
.layers .wide { justify-content: flex-start; padding-left: 3px; }
.layers .text { padding-left: 1px; }

.docbar { display: flex; justify-content: space-between; flex: none; height: 35px; padding-top: 2px; background: linear-gradient(#555 1px, #999 2px, #8a8a8a 28px, #777 29px, #5c5c5c 30px, #5c5c5c 33px, #999 33px); }
.doctabs { padding-top: 1px; }
.dims { display: flex; align-items: center; flex: none; width: 515px; height: 25px; margin-top: 1px; background: #eee; border: 1px solid #3a3a3a; border-right: 0; overflow: hidden; }
.dims button { width: 23px; height: 22px; justify-content: center; flex: none; }
.dims svg { fill: none; stroke: #333; }
.dims b { width: 1px; height: 18px; margin: 0 3px 0 2px; background: #999; flex: none; }
.grip { width: 7px; align-self: stretch; flex: none; background: radial-gradient(circle, #bbb 1px, transparent 1px) 0 0 / 3px 3px #444; }
.style { width: 60px; height: 20px; flex: none; border: 1px solid #888; border-radius: 3px; background: linear-gradient(#fff, #ddd); }

.canvas { flex: 1; position: relative; min-height: 0; overflow: hidden; background: #212830; }
.drawing { width: 100%; height: 100%; }
.viewlabel { position: absolute; left: 0; top: 5px; line-height: 17px; color: #ddd; font-weight: 600; font-size: 11px; }
.cmdline { position: absolute; bottom: -3px; left: 466px; display: flex; align-items: center; width: 387px; height: 24px; background: rgb(196 196 198 / .95); border-top: 1px solid #777; border-radius: 3px 3px 0 0; overflow: hidden; }
.cmdhead { display: flex; align-items: center; gap: 8px; width: 54px; height: 100%; padding-left: 3px; margin-right: 5px; background: linear-gradient(#777, #4c4c4c); }
.cmdhead .grip { margin-right: -6px; background-color: transparent; }
.cmdline > .car { margin: 0 6px 0 3px; }
.cmdline input { flex: 1; min-width: 0; font-family: "DejaVu Sans Mono", monospace; font-size: 12px; font-style: italic; }
.cmdline input::placeholder { color: #777; opacity: 1; }
.cmdline > button { width: 14px; color: #111; }
```
